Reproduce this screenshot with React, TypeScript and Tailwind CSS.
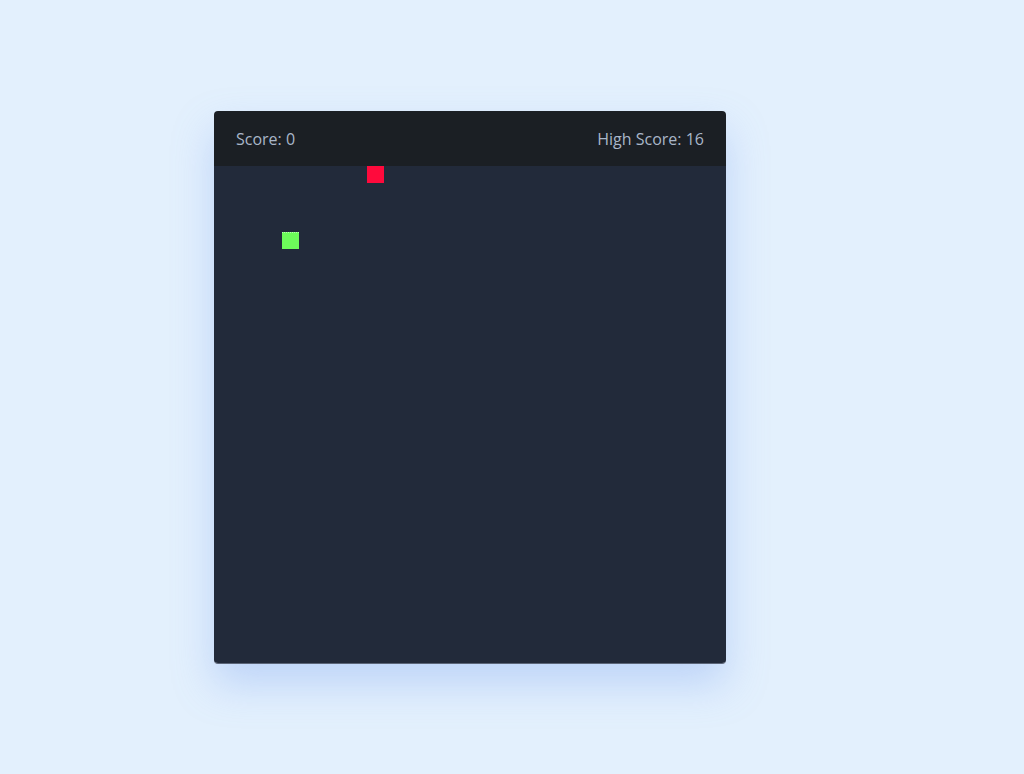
import React from "react";

const App: React.FC = () => {
	return (
		<div className="min-h-screen w-full bg-[#e3f0fd] pl-[214px] pt-[111px]" style={{ fontFamily: '"Open Sans", "Noto Sans", sans-serif' }}>
			{/* GAME CARD */}
			<div className="w-[512px] rounded-[4px] overflow-hidden border-b border-[#5b6578] shadow-[0_20px_40px_rgba(120,160,240,0.35)]">
				{/* HEADER */}
				<div className="h-[55px] bg-[#1b1f24] flex items-center justify-between px-[22px] pt-[1px] text-[16px] font-medium text-[#a9b6c8]">
					<span>Score: 0</span>
					<span>High Score: 16</span>
				</div>

				{/* BOARD */}
				<div className="relative h-[497px] bg-[#222a3a]">
					{/* food */}
					<div className="absolute left-[153px] top-0 w-[17px] h-[17px] bg-[#ff0a3c]"></div>
					{/* snake */}
					<div className="absolute left-[68px] top-[66px] w-[17px] h-[17px] bg-[#6dfc5a] border-t border-dotted border-[#b8ffb0]"></div>
				</div>
			</div>
		</div>
	);
};

export default App;
